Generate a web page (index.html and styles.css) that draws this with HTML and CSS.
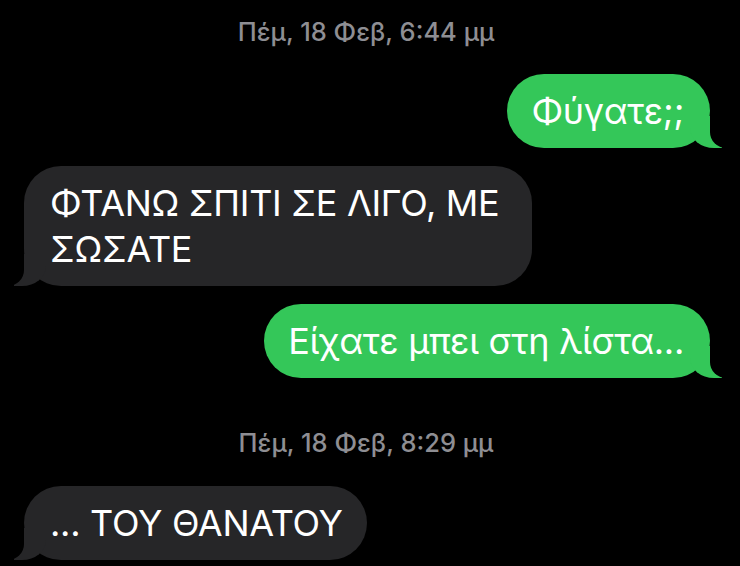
FILE: index.html
```html
<!DOCTYPE html>
<html lang="el">
<head>
    <meta charset="UTF-8">
    <meta name="viewport" content="width=device-width, initial-scale=1.0">
    <title>Μηνύματα</title>
    <link rel="stylesheet" href="styles.css">
</head>
<body>
    <div class="chat">
        <div class="stamp">Πέμ, 18 Φεβ, 6:44 μμ</div>

        <div class="msg sent">Φύγατε;;</div>
        <div class="msg received">ΦΤΑΝΩ ΣΠΙΤΙ ΣΕ ΛΙΓΟ, ΜΕ ΣΩΣΑΤΕ</div>
        <div class="msg sent">Είχατε μπει στη λίστα...</div>

        <div class="stamp stamp-later">Πέμ, 18 Φεβ, 8:29 μμ</div>

        <div class="msg received">... ΤΟΥ ΘΑΝΑΤΟΥ</div>
    </div>
</body>
</html>
```

FILE: styles.css
```css
body {
    margin: 0;
    padding: 0;
    background: #000;
    font-family: 'Inter', 'Noto Sans', sans-serif;
    height: 100vh;
    overflow: hidden;
}

.chat {
    display: flex;
    flex-direction: column;
    padding-top: 18px;
}

.stamp {
    align-self: center;
    margin-left: -8px;
    color: #8e8e93;
    font-size: 25.5px;
    font-weight: 500;
    line-height: 28px;
    margin-bottom: 28px;
}

.stamp-later {
    margin-top: 51px;
    margin-bottom: 29px;
}

.msg {
    position: relative;
    max-width: 458px;
    padding: 14px 24px 14px 26px;
    border-radius: 37px;
    font-size: 36px;
    line-height: 46px;
    letter-spacing: -0.3px;
    color: #fff;
}

.msg + .msg {
    margin-top: 18px;
}

.sent {
    align-self: flex-end;
    margin-right: 30px;
    background: #34c759;
    padding: 14px 26px 14px 24px;
}

.received {
    align-self: flex-start;
    margin-left: 24px;
    background: #262628;
}

/* little tails at the bottom corner */
.msg::before,
.msg::after {
    content: "";
    position: absolute;
    bottom: 0;
    height: 32px;
}

.sent::before {
    right: -12px;
    width: 32px;
    background: #34c759;
    border-bottom-left-radius: 24px 20px;
}

.sent::after {
    right: -40px;
    width: 40px;
    background: #000;
    border-bottom-left-radius: 16px;
}

.received::before {
    left: -10px;
    width: 32px;
    background: #262628;
    border-bottom-right-radius: 24px 20px;
}

.received::after {
    left: -40px;
    width: 40px;
    background: #000;
    border-bottom-right-radius: 16px;
}
```
